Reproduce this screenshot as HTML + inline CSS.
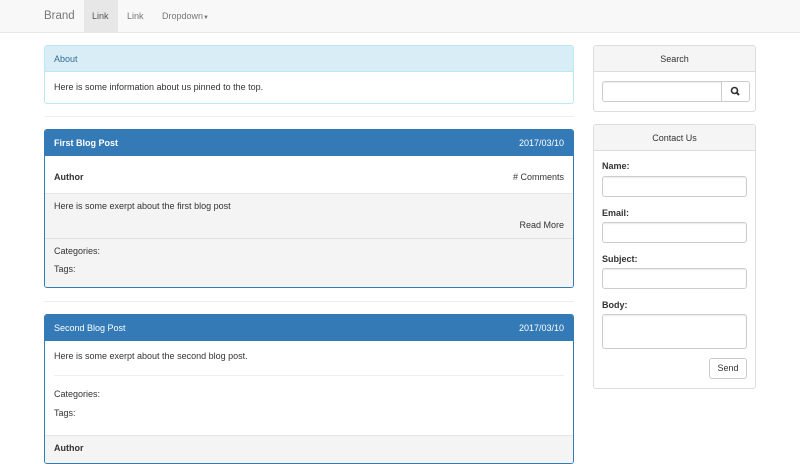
<!DOCTYPE html>
<html><head><meta charset="utf-8"><style>
*{box-sizing:border-box;margin:0;padding:0}
body{width:800px;height:450px;overflow:hidden;background:#fff;font-family:"Liberation Sans",sans-serif;font-size:9px;color:#333;position:relative}
.a{position:absolute}
.nav{left:0;top:0;width:800px;height:33px;background:#f8f8f8;border-bottom:1px solid #e7e7e7}
.t{position:absolute;white-space:nowrap;line-height:12px}
.panel{position:absolute;border:1px solid;border-radius:3px;overflow:hidden}
.inp{position:absolute;border:1px solid #ccc;border-radius:3px;background:#fff;box-shadow:inset 0 1px 1px rgba(0,0,0,.075)}
.hr{position:absolute;height:1px;background:#eee}
</style></head><body>
<div class="a nav"></div>
<div class="a" style="left:84px;top:0;width:34px;height:32px;background:#e7e7e7"></div>
<div class="t" style="left:44px;top:9px;font-size:11.5px;line-height:14px;color:#777">Brand</div>
<div class="t" style="left:92px;top:10px;color:#555">Link</div>
<div class="t" style="left:127px;top:10px;color:#777">Link</div>
<div class="t" style="left:162px;top:10px;color:#777">Dropdown<span style="font-size:6px">▼</span></div>

<div class="panel" style="left:44px;top:45px;width:530px;height:59px;border-color:#bce8f1">
<div class="a" style="left:0;top:0;width:100%;height:26px;background:#d9edf7;border-bottom:1px solid #bce8f1"></div>
<div class="t" style="left:9px;top:7px;color:#31708f">About</div>
<div class="t" style="left:9px;top:35px">Here is some information about us pinned to the top.</div>
</div>
<div class="hr" style="left:44px;top:116px;width:530px"></div>

<div class="panel" style="left:44px;top:129px;width:530px;height:159px;border-color:#337ab7">
<div class="a" style="left:0;top:0;width:100%;height:26px;background:#337ab7"></div>
<div class="t" style="left:9px;top:7px;color:#fff;font-weight:bold">First Blog Post</div>
<div class="t" style="right:9px;top:7px;color:#fff">2017/03/10</div>
<div class="t" style="left:9px;top:41px;font-weight:bold">Author</div>
<div class="t" style="right:9px;top:41px"># Comments</div>
<div class="a" style="left:0;top:63px;width:100%;height:96px;background:#f4f4f4;border-top:1px solid #e5e5e5"></div>
<div class="a" style="left:0;top:108px;width:100%;height:1px;background:#e0e0e0"></div>
<div class="t" style="left:9px;top:70px">Here is some exerpt about the first blog post</div>
<div class="t" style="right:9px;top:89px">Read More</div>
<div class="t" style="left:9px;top:115px">Categories:</div>
<div class="t" style="left:9px;top:133px">Tags:</div>
</div>
<div class="hr" style="left:44px;top:301px;width:530px"></div>

<div class="panel" style="left:44px;top:314px;width:530px;height:150px;border-color:#337ab7">
<div class="a" style="left:0;top:0;width:100%;height:26px;background:#337ab7"></div>
<div class="t" style="left:9px;top:7px;color:#fff">Second Blog Post</div>
<div class="t" style="right:9px;top:7px;color:#fff">2017/03/10</div>
<div class="t" style="left:9px;top:35px">Here is some exerpt about the second blog post.</div>
<div class="a" style="left:9px;top:60px;width:510px;height:1px;background:#eee"></div>
<div class="t" style="left:9px;top:73px">Categories:</div>
<div class="t" style="left:9px;top:92px">Tags:</div>
<div class="a" style="left:0;top:120px;width:100%;height:40px;background:#f4f4f4;border-top:1px solid #e5e5e5"></div>
<div class="t" style="left:9px;top:127px;font-weight:bold">Author</div>
</div>

<div class="panel" style="left:593px;top:45px;width:163px;height:67px;border-color:#ddd">
<div class="a" style="left:0;top:0;width:100%;height:26px;background:#f5f5f5;border-bottom:1px solid #ddd"></div>
<div class="t" style="left:0;width:100%;text-align:center;top:7px">Search</div>
<div class="inp" style="left:8px;top:35px;width:121px;height:21px;border-radius:3px 0 0 3px"></div>
<div class="inp" style="left:127px;top:35px;width:29px;height:21px;border-radius:0 3px 3px 0;box-shadow:none">
<svg width="27" height="19" viewBox="0 0 27 19"><circle cx="12.5" cy="8.5" r="3" fill="none" stroke="#333" stroke-width="1.6"/><path d="M14.7 10.7L17 13" stroke="#333" stroke-width="2"/></svg></div>
</div>

<div class="panel" style="left:593px;top:124px;width:163px;height:265px;border-color:#ddd">
<div class="a" style="left:0;top:0;width:100%;height:26px;background:#f5f5f5;border-bottom:1px solid #ddd"></div>
<div class="t" style="left:0;width:100%;text-align:center;top:7px">Contact Us</div>
<div class="t" style="left:8px;top:35px;font-weight:bold">Name:</div>
<div class="inp" style="left:8px;top:51px;width:145px;height:21px"></div>
<div class="t" style="left:8px;top:82px;font-weight:bold">Email:</div>
<div class="inp" style="left:8px;top:97px;width:145px;height:21px"></div>
<div class="t" style="left:8px;top:128px;font-weight:bold">Subject:</div>
<div class="inp" style="left:8px;top:143px;width:145px;height:21px"></div>
<div class="t" style="left:8px;top:174px;font-weight:bold">Body:</div>
<div class="inp" style="left:8px;top:189px;width:145px;height:35px"></div>
<div class="a" style="left:115px;top:233px;width:38px;height:21px;border:1px solid #ccc;border-radius:3px;text-align:center;line-height:19px">Send</div>
</div>
</body></html>
